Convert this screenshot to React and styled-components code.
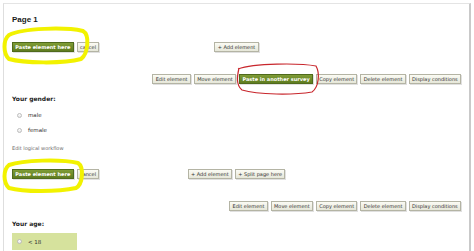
import React from "react";
import styled, { createGlobalStyle } from "styled-components";

const Global = createGlobalStyle`
  html, body { margin: 0; padding: 0; background: #ffffff; overflow: hidden; }
  #root { width: 474px; height: 251px; }
`;

const Page = styled.div`
  width: 474px;
  height: 251px;
  padding: 3px 0 0 3px;
  box-sizing: border-box;
`;

const Panel = styled.div`
  position: relative;
  width: 468px;
  height: 248px;
  box-sizing: border-box;
  border-top: 1px solid #e4e4e4;
  border-left: 1px solid #dedede;
  border-right: 2px solid #c9c9c9;
  padding: 0 8px 0 8px;
  display: flex;
  flex-direction: column;
  font-family: "DejaVu Sans", Verdana, sans-serif;
  color: #222;
`;

const Title = styled.div`
  margin-top: 11px;
  font-family: "Liberation Sans", Arial, sans-serif;
  font-weight: bold;
  font-size: 8px;
  line-height: 10px;
  color: #1a1a1a;
`;

const Row = styled.div`
  margin-top: ${(p) => p.$mt}px;
  display: grid;
  grid-template-columns: 1fr auto 1fr;
  align-items: center;
  height: 10px;
`;

const RightRow = styled.div`
  margin-top: ${(p) => p.$mt}px;
  display: flex;
  justify-content: flex-end;
  gap: 3px;
  height: 10px;
  align-items: center;
`;

const Group = styled.div`
  display: flex;
  gap: 3px;
  justify-self: ${(p) => p.$align || "start"};
`;

const Button = styled.button`
  font-family: "DejaVu Sans", Verdana, sans-serif;
  font-size: 5px;
  line-height: 8px;
  height: 10px;
  padding: 0 2.3px;
  margin: 0;
  box-sizing: border-box;
  white-space: nowrap;
  cursor: pointer;
  border: 1px solid ${(p) => (p.$primary ? "#4f6a1c" : "#b4b4a4")};
  background: ${(p) =>
    p.$primary
      ? "linear-gradient(#7f9c36, #5f7c20)"
      : "linear-gradient(#fbfbf4, #e6e7d9)"};
  color: ${(p) => (p.$primary ? "#ffffff" : "#333")};
  font-weight: ${(p) => (p.$primary ? "bold" : "normal")};
  box-shadow: 1px 1px 0 rgba(0, 0, 0, 0.12);
`;

const Label = styled.div`
  margin-top: ${(p) => p.$mt}px;
  font-size: 6px;
  line-height: 8px;
  font-weight: 600;
  color: #1e1e1e;
`;

const Option = styled.label`
  margin-top: ${(p) => p.$mt}px;
  display: flex;
  align-items: center;
  gap: 6px;
  height: 10px;
  padding-left: 5px;
  font-size: 5.5px;
  color: #333;
`;

const Radio = styled.span`
  width: 5px;
  height: 5px;
  border-radius: 50%;
  border: 1px solid #bdbdbd;
  background: linear-gradient(#ffffff, #e6e6e6);
  box-sizing: border-box;
  flex: none;
`;

const Link = styled.div`
  margin-top: ${(p) => p.$mt}px;
  font-size: 5px;
  line-height: 8px;
  color: #6a6a6a;
`;

const AnswerBox = styled.div`
  margin-top: ${(p) => p.$mt}px;
  width: 65px;
  height: 17px;
  background: #d6e29d;
  display: flex;
  align-items: center;
  gap: 6px;
  padding-left: 5px;
  box-sizing: border-box;
  font-size: 5.5px;
  color: #333;
`;

const Mark = styled.svg`
  position: absolute;
  pointer-events: none;
  overflow: visible;
`;

export default function App() {
  return (
    <>
      <Global />
      <Page>
        <Panel>
          <Title>Page 1</Title>

          <Row $mt={17}>
            <Group>
              <Button $primary>Paste element here</Button>
              <Button>cancel</Button>
            </Group>
            <Group $align="center">
              <Button>+ Add element</Button>
            </Group>
            <div />
          </Row>

          <RightRow $mt={22}>
            <Button>Edit element</Button>
            <Button>Move element</Button>
            <Button $primary>Paste in another survey</Button>
            <Button>Copy element</Button>
            <Button>Delete element</Button>
            <Button>Display conditions</Button>
          </RightRow>

          <Label $mt={11}>Your gender:</Label>
          <Option $mt={7}>
            <Radio />
            male
          </Option>
          <Option $mt={5}>
            <Radio />
            female
          </Option>
          <Link $mt={9}>Edit logical workflow</Link>

          <Row $mt={17}>
            <Group>
              <Button $primary>Paste element here</Button>
              <Button>cancel</Button>
            </Group>
            <Group $align="center">
              <Button>+ Add element</Button>
              <Button>+ Split page here</Button>
            </Group>
            <div />
          </Row>

          <RightRow $mt={22}>
            <Button>Edit element</Button>
            <Button>Move element</Button>
            <Button>Copy element</Button>
            <Button>Delete element</Button>
            <Button>Display conditions</Button>
          </RightRow>

          <Label $mt={9}>Your age:</Label>
          <AnswerBox $mt={5}>
            <Radio />
            &lt; 18
          </AnswerBox>

          <Mark style={{ left: -1, top: 23, width: 86, height: 37 }} viewBox="0 0 86 37">
            <path
              d="M6 8 C20 1, 62 0, 80 4 C87 8, 85 27, 78 32 C60 37, 20 36, 6 32 C0 26, 0 13, 6 8 Z"
              fill="none"
              stroke="#f2f200"
              strokeWidth="4"
            />
          </Mark>

          <Mark style={{ left: -1, top: 155, width: 81, height: 34 }} viewBox="0 0 81 34">
            <path
              d="M6 6 C20 1, 58 0, 75 4 C81 8, 80 25, 73 29 C55 33, 20 33, 6 29 C0 23, 0 11, 6 6 Z"
              fill="none"
              stroke="#f2f200"
              strokeWidth="4"
            />
          </Mark>

          <Mark style={{ left: 229, top: 59, width: 88, height: 32 }} viewBox="0 0 86 32">
            <path
              d="M4 6 C20 0, 66 0, 82 3 C86 10, 85 24, 78 29 C60 32, 24 32, 8 27 C2 22, 3 14, 5 5"
              fill="none"
              stroke="#c8262c"
              strokeWidth="1.2"
            />
          </Mark>
        </Panel>
      </Page>
    </>
  );
}
